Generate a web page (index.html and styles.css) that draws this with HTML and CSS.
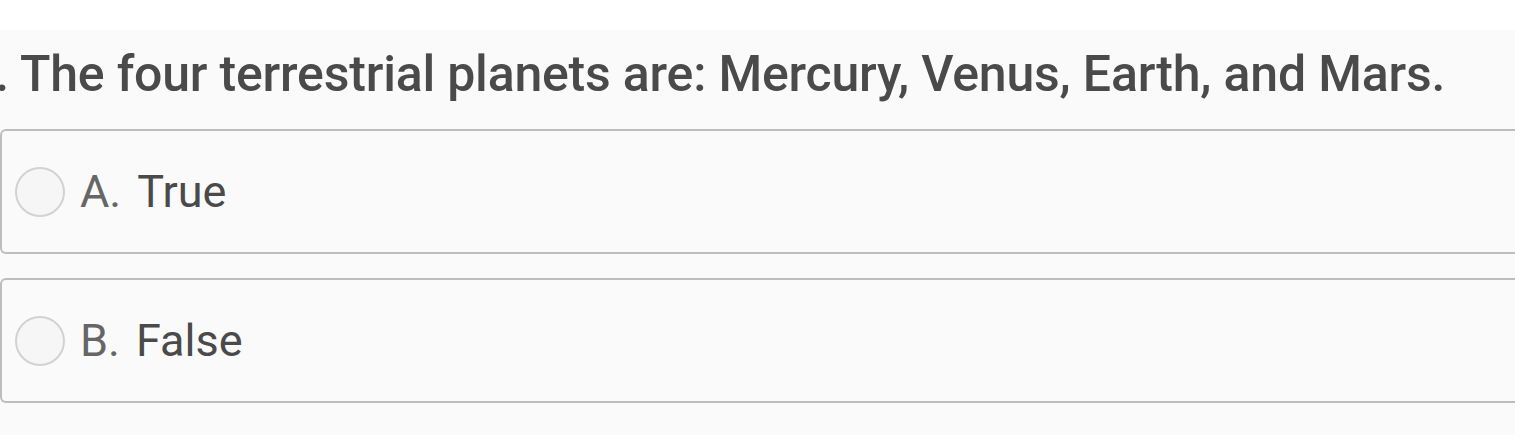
FILE: index.html
```html
<!DOCTYPE html>
<html>

<head lang="en">
    <meta charset="UTF-8">
    <title>Quiz</title>
    <link rel="stylesheet" href="styles.css">
</head>

<body>
    <div class="quiz">
        <h2 class="question">1. The four terrestrial planets are: Mercury, Venus, Earth, and Mars.</h2>
        <div class="options">
            <label class="option">
                <span class="radio"></span>
                <span class="letter">A.</span>
                <span class="answer">True</span>
            </label>
            <label class="option">
                <span class="radio"></span>
                <span class="letter">B.</span>
                <span class="answer">False</span>
            </label>
        </div>
    </div>
</body>

</html>
```

FILE: styles.css
```css
body {
    margin: 0;
    background: #fff;
    font-family: Roboto, "Liberation Sans", sans-serif;
    overflow: hidden;
}

.quiz {
    margin-top: 30px;
    background: #fafafa;
    height: 405px;
}

.question {
    margin: 0 0 0 -33px;
    height: 99px;
    box-sizing: border-box;
    padding-top: 12px;
    font-size: 50px;
    font-weight: 500;
    letter-spacing: -0.2px;
    line-height: 64px;
    color: #4a4a4a;
    white-space: nowrap;
}

.options {
    margin-right: -10px;
}

.option {
    display: flex;
    align-items: center;
    height: 125px;
    box-sizing: border-box;
    margin-bottom: 24px;
    padding-left: 13px;
    border: 2px solid #bdbdbd;
    border-right: none;
    border-radius: 6px 0 0 6px;
    font-size: 45px;
    color: #4a4a4a;
}

.radio {
    width: 50px;
    height: 50px;
    box-sizing: border-box;
    border: 2.5px solid #d2d2d2;
    border-radius: 50%;
    background: #f6f6f6;
    margin-right: 15px;
}

.letter {
    color: #666;
    margin-right: 16px;
}
```
